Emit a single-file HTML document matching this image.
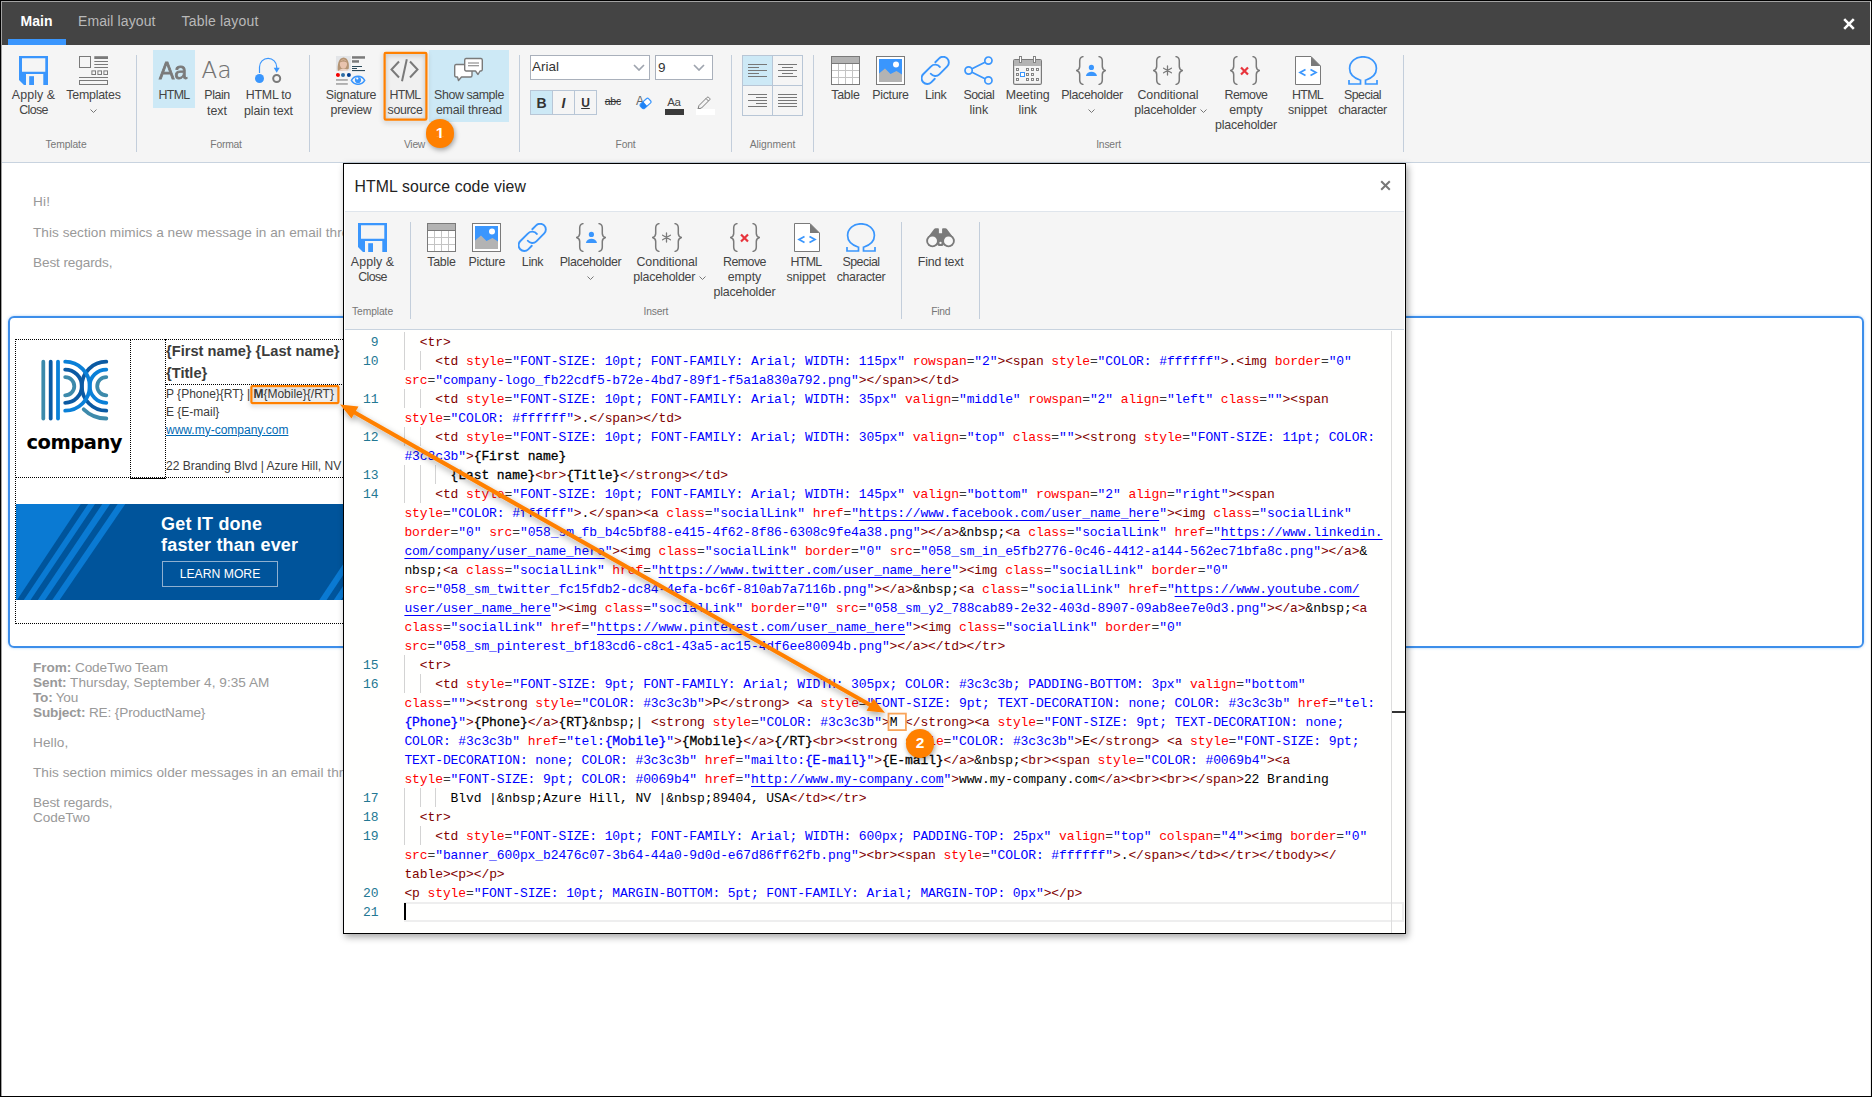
<!DOCTYPE html><html><head><meta charset="utf-8"><title>HTML source code view</title><style>
*{box-sizing:border-box;margin:0;padding:0}
html,body{width:1872px;height:1097px;overflow:hidden;background:#fff}
body{position:relative;font-family:"Liberation Sans",sans-serif;font-size:12px;color:#444}
.abs{position:absolute}
#frame{position:absolute;left:0;top:0;width:1872px;height:1097px;border:1px solid #000;z-index:50;pointer-events:none}
#frame2{position:absolute;left:1px;top:1px;width:1870px;height:1095px;border-left:1px solid #a3a3a3;border-top:1px solid #a3a3a3;border-right:1px solid #ececec;z-index:49}
#hdr{position:absolute;left:2px;top:2px;width:1869px;height:43px;background:#444}
.tab{position:absolute;top:13px;font-size:14px;line-height:17px;color:#b9b9b9;white-space:nowrap}
.rib{position:absolute;background:#f5f5f5}
.lbl{position:absolute;white-space:nowrap;text-align:center;font-size:12.4px;line-height:15px;color:#444;transform:translateX(-50%)}
.grp{position:absolute;white-space:nowrap;font-size:10.3px;line-height:12px;color:#777;transform:translateX(-50%)}
.sep{position:absolute;width:1px;background:#c3cedb}
.ico{position:absolute}
.ico svg{display:block}
.chev{position:absolute;width:7px;height:4px}
.chev svg{display:block}
.hl{position:absolute;background:#cde9f6}
.mail{position:absolute;white-space:nowrap;font-size:13.6px;line-height:16px;color:#999}
.sig{position:absolute;white-space:nowrap;font-family:"Liberation Sans",sans-serif;color:#3c3c3b}
.ln{position:absolute;left:345px;width:33.5px;text-align:right;font-family:"Liberation Mono",monospace;font-size:13px;letter-spacing:-0.1px;line-height:19px;color:#237893;white-space:pre}
.cl{position:absolute;left:404.4px;font-family:"Liberation Mono",monospace;font-size:13px;letter-spacing:-0.1px;line-height:19px;color:#000;white-space:pre}
.cl .d,.cl .t{color:#800000}
.cl .a{color:#ff0000}
.cl .e{color:#383838}
.cl .v,.cl .u,.cl .vb{color:#0000ff}
.cl .u{text-decoration:underline;text-underline-offset:3px}
.cl .pb,.cl .vb{font-weight:normal;-webkit-text-stroke:.28px currentColor}
.guide{position:absolute;width:1px;background:#d3d3d3}
.obox{position:absolute;border:2px solid #f5821f;box-shadow:0 0 5px rgba(0,0,0,.35)}
.ocirc{position:absolute;width:28.8px;height:28.8px;border-radius:50%;background:#ff8000;color:#fff;font-size:15.5px;font-weight:bold;line-height:28.8px;text-align:center;box-shadow:1px 2px 5px rgba(0,0,0,.35)}
</style></head><body>
<div id="frame2"></div>
<div id="hdr"></div>
<div class="tab" style="left:20.5px;color:#fff"><span style="font-weight:bold;font-size:14.0px;letter-spacing:0.078px">Main</span></div>
<div class="tab" style="left:78px"><span style="font-size:14.0px;letter-spacing:0.112px">Email layout</span></div>
<div class="tab" style="left:181.5px"><span style="font-size:14.0px;letter-spacing:0.190px">Table layout</span></div>
<div class="abs" style="left:8px;top:39px;width:58px;height:6px;background:#3a96fd"></div>
<svg class="abs" style="left:1843px;top:18px" width="12" height="12" viewBox="0 0 12 12"><path d="M1.2 1.2L10.8 10.8M10.8 1.2L1.2 10.8" stroke="#fff" stroke-width="2.6"/></svg>
<div class="rib" style="left:2px;top:45px;width:1869px;height:117px"></div>
<div class="abs" style="left:2px;top:162px;width:1869px;height:1px;background:#c8d3df"></div>
<div class="hl" style="left:153px;top:50px;width:42px;height:58px"></div>
<div class="hl" style="left:429px;top:50px;width:80px;height:72px"></div>
<div class="ico" style="left:19.0px;top:56px"><svg xmlns="http://www.w3.org/2000/svg" width="29" height="29" viewBox="0 0 29 29"><path fill="#3a96fd" fill-rule="evenodd" d="M0 0H29V29H24.3V18H7V29H5L0 24Z M3 2.2H26.3V15.8H3Z"/><rect x="10.2" y="20.2" width="4.8" height="8.8" fill="#3a96fd"/></svg></div><div class="lbl" style="left:33.5px;top:88.2px"><span style="font-size:12.4px;letter-spacing:0.102px">Apply &amp;</span><br><span style="font-size:12.4px;letter-spacing:-0.594px">Close</span></div>
<div class="ico" style="left:79.0px;top:56px"><svg xmlns="http://www.w3.org/2000/svg" width="29" height="29" viewBox="0 0 29 29"><g fill="none" stroke="#7a7a7a" stroke-width="1">
<rect x="0.5" y="0.5" width="11" height="11"/>
<path d="M15.3 5.5H29M15.3 8.5H29M15.3 11.5H29M0 21.5H29"/>
<rect x="12.9" y="14.9" width="3.6" height="3.6"/><rect x="18.9" y="14.9" width="3.6" height="3.6"/><rect x="24.9" y="14.9" width="3.6" height="3.6"/>
<rect x="0.5" y="24.5" width="28" height="4"/></g>
<rect x="15.3" y="0.2" width="13.7" height="2.8" fill="#7a7a7a"/></svg></div><div class="lbl" style="left:93.5px;top:88.2px"><span style="font-size:12.4px;letter-spacing:-0.237px">Templates</span></div>
<div class="chev" style="left:90.3px;top:108.5px"><svg width="7" height="4" viewBox="0 0 7 4"><path d="M0.5 0.5L3.5 3.5L6.5 0.5" fill="none" stroke="#777" stroke-width="1"/></svg></div>
<div class="sep" style="left:136px;top:55px;height:97px"></div>
<div class="abs" style="left:158.8px;top:57.5px;font-size:24.5px;font-weight:normal;-webkit-text-stroke:.85px #7a7a7a;color:#7a7a7a;line-height:26px;transform:scaleX(.94);transform-origin:0 0">Aa</div>
<div class="abs" style="left:201.5px;top:56.8px;font-size:22.8px;font-family:'DejaVu Sans Light','DejaVu Sans',sans-serif;font-weight:200;color:#707070;-webkit-text-stroke:.15px #707070;letter-spacing:.3px;line-height:26px">Aa</div>
<div class="lbl" style="left:174px;top:88.2px"><span style="font-size:12.4px;letter-spacing:-0.633px">HTML</span></div>
<div class="lbl" style="left:217px;top:87.8px;line-height:15.8px"><span style="font-size:12.4px;letter-spacing:-0.431px">Plain</span><br><span style="font-size:12.4px;letter-spacing:-0.018px">text</span></div>
<div class="ico" style="left:254.0px;top:56px"><svg xmlns="http://www.w3.org/2000/svg" width="29" height="29" viewBox="0 0 29 29"><circle cx="5.5" cy="22.5" r="4.5" fill="#3a96fd"/>
<circle cx="22.7" cy="22.5" r="3.5" fill="none" stroke="#7a7a7a" stroke-width="2"/>
<path d="M5.5 17V11A8.6 8.6 0 0 1 22.7 11V13" fill="none" stroke="#3a96fd" stroke-width="1.2"/>
<path d="M19.7 11.7H25.7L22.7 16.7Z" fill="#3a96fd"/></svg></div><div class="lbl" style="line-height:15.8px;margin-top:-.4px;left:268.5px;top:88.2px"><span style="font-size:12.4px;letter-spacing:-0.210px">HTML to</span><br><span style="font-size:12.4px;letter-spacing:-0.068px">plain text</span></div>
<div class="sep" style="left:309px;top:55px;height:97px"></div>
<div class="ico" style="left:336.0px;top:56px"><svg xmlns="http://www.w3.org/2000/svg" width="30" height="29" viewBox="0 0 30 29"><rect x="0" y="0" width="14.8" height="14.8" fill="#e3e5e8"/>
<path d="M1.8 14.8C1.2 9 2.5 1.6 7.6 1.4C12.6 1.6 13.6 9 12.6 13C11.5 14 3 14.6 1.8 14.8Z" fill="#b49474"/>
<ellipse cx="7.4" cy="8" rx="3.6" ry="4.6" fill="#e8c3ae"/>
<path d="M3.5 7C4 3.4 10.6 3 11.2 7C9.5 5.2 5.6 5 3.5 7Z" fill="#a98a68"/>
<path d="M3 14.8C4 12.2 11 12.2 12.4 14.8Z" fill="#ecd3c6"/>
<rect x="16" y="0.2" width="13" height="2.5" fill="#7a7a7a"/><rect x="16" y="4.2" width="7" height="2.5" fill="#7a7a7a"/>
<rect x="16" y="10" width="10" height="1" fill="#2c4a5a"/><rect x="16" y="12" width="5" height="1" fill="#2c4a5a"/><rect x="16" y="14" width="13" height="1.1" fill="#2c4a5a"/>
<circle cx="1.95" cy="19" r="2" fill="#f40000"/><circle cx="7" cy="19" r="2" fill="#2e6da4"/><circle cx="12.9" cy="19" r="2" fill="#003d8f"/>
<rect x="0" y="23.1" width="11.8" height="1.7" fill="#a8a8a8"/><rect x="0" y="27.1" width="11.8" height="1.7" fill="#a8a8a8"/>
<path d="M15.4 24.4C18.5 19 25.5 19 28.7 24.4C25.5 29.6 18.5 29.6 15.4 24.4Z" fill="none" stroke="#3a96fd" stroke-width="1.5"/>
<circle cx="22" cy="24" r="3.1" fill="#3a96fd"/><circle cx="21.3" cy="22.5" r="1.1" fill="#fff"/></svg></div><div class="lbl" style="left:351px;top:88.2px"><span style="font-size:12.4px;letter-spacing:-0.287px">Signature</span><br><span style="font-size:12.4px;letter-spacing:-0.234px">preview</span></div>
<div class="abs" style="left:384px;top:52px;width:43px;height:68px;background:#f0f0f0;box-shadow:inset 0 0 5px rgba(0,0,0,.16)"></div>
<div class="ico" style="left:389.7px;top:56px"><svg xmlns="http://www.w3.org/2000/svg" width="29" height="29" viewBox="0 0 29 29"><g fill="none" stroke="#7a7a7a" stroke-width="2"><path d="M9 5.5L1.5 13.5L9 21.5"/><path d="M20 5.5L27.5 13.5L20 21.5"/><path d="M16.8 3.3L12 25.3"/></g></svg></div><div class="lbl" style="left:405px;top:88.2px"><span style="font-size:12.4px;letter-spacing:-0.633px">HTML</span><br><span style="font-size:12.4px;letter-spacing:-0.389px">source</span></div>
<div class="ico" style="left:453.8px;top:56px"><svg xmlns="http://www.w3.org/2000/svg" width="29" height="29" viewBox="0 0 29 29"><g stroke="#7a7a7a" stroke-width="1.4" fill="#fff" stroke-linejoin="round">
<path d="M2 8.5H16.5A1.5 1.5 0 0 1 18 10V19.5A1.5 1.5 0 0 1 16.5 21H7.5L4.5 24.5L3.5 21H2A1.5 1.5 0 0 1 .7 19.5V10A1.5 1.5 0 0 1 2 8.5Z"/>
<path d="M12 2.5H27A1.5 1.5 0 0 1 28.3 4V13.5A1.5 1.5 0 0 1 27 15H26L24 18.5L21.5 15H12A1.5 1.5 0 0 1 10.7 13.5V4A1.5 1.5 0 0 1 12 2.5Z"/></g>
<path d="M14 7H25M14 9.8H25" stroke="#7a7a7a" stroke-width="1.1"/></svg></div><div class="lbl" style="left:469px;top:88.2px"><span style="font-size:12.4px;letter-spacing:-0.414px">Show sample</span><br><span style="font-size:12.4px;letter-spacing:-0.166px">email thread</span></div>
<div class="sep" style="left:519px;top:55px;height:97px"></div>
<div class="abs" style="left:530px;top:55px;width:120px;height:25px;background:#fff;border:1px solid #a9b0bb"></div>
<div class="abs" style="left:532px;top:59px;font-size:13.5px;color:#333;line-height:16px">Arial</div>
<svg class="abs" style="left:633px;top:64px" width="12" height="7" viewBox="0 0 12 7"><path d="M1 1L6 6L11 1" fill="none" stroke="#9fa5af" stroke-width="1.7"/></svg>
<div class="abs" style="left:655px;top:55px;width:58px;height:25px;background:#fff;border:1px solid #a9b0bb"></div>
<div class="abs" style="left:658px;top:59.5px;font-size:13.5px;color:#333;line-height:16px">9</div>
<svg class="abs" style="left:693px;top:64px" width="12" height="7" viewBox="0 0 12 7"><path d="M1 1L6 6L11 1" fill="none" stroke="#9fa5af" stroke-width="1.7"/></svg>
<div class="abs" style="left:530px;top:90px;width:67px;height:25px;border:1px solid #b8c6d6"></div>
<div class="abs" style="left:531px;top:91px;width:21px;height:23px;background:#cde9f6"></div>
<div class="abs" style="left:552px;top:91px;width:1px;height:23px;background:#b8c6d6"></div>
<div class="abs" style="left:574px;top:91px;width:1px;height:23px;background:#b8c6d6"></div>
<div class="abs" style="left:531px;top:94px;width:21px;text-align:center;font-size:14px;font-weight:bold;color:#333;line-height:18px">B</div>
<div class="abs" style="left:553px;top:94px;width:21px;text-align:center;font-size:14px;font-weight:bold;font-style:italic;color:#333;line-height:18px">I</div>
<div class="abs" style="left:575px;top:94px;width:21px;text-align:center;font-size:12px;font-weight:bold;text-decoration:underline;color:#333;line-height:18px">U</div>
<div class="abs" style="left:604.8px;top:94.2px;font-size:10.5px;text-decoration:line-through;color:#333;line-height:14px;letter-spacing:-.3px">abc</div>
<div class="abs" style="left:636px;top:94px;font-size:12px;color:#666;line-height:14px">A</div>
<svg class="abs" style="left:639.3px;top:97.3px" width="13" height="13" viewBox="0 0 14 14"><g transform="rotate(-42 7 7)"><rect x="1" y="3.8" width="12" height="6.4" rx="1.8" fill="#fff" stroke="#3a96fd" stroke-width="1.3"/><path d="M1 6A2.2 2.2 0 0 1 3.2 3.8H6.5V10.2H3.2A2.2 2.2 0 0 1 1 8Z" fill="#1e82f5"/></g></svg>
<div class="abs" style="left:667.3px;top:95.2px;font-size:11.5px;color:#444;line-height:14px;letter-spacing:-.4px">Aa</div>
<div class="abs" style="left:665px;top:109px;width:19px;height:6px;background:#3a3a3a"></div>
<svg class="abs" style="left:697px;top:96px" width="14" height="14" viewBox="0 0 14 14"><g fill="none" stroke="#7a7a7a" stroke-width="1"><path d="M1 13L2 9.5L10.2 1.3A1 1 0 0 1 11.6 1.3L12.7 2.4A1 1 0 0 1 12.7 3.8L4.5 12Z"/><path d="M9 2.5L11.5 5"/></g></svg>
<div class="abs" style="left:696px;top:109px;width:19px;height:6px;background:#fff"></div>
<div class="sep" style="left:731px;top:55px;height:97px"></div>
<div class="abs" style="left:742px;top:55px;width:61px;height:61px;border:1px solid #b8c6d6"></div>
<div class="abs" style="left:743px;top:56px;width:29px;height:29px;background:#cde9f6"></div>
<div class="abs" style="left:772px;top:56px;width:1px;height:59px;background:#b8c6d6"></div>
<div class="abs" style="left:743px;top:85px;width:59px;height:1px;background:#b8c6d6"></div>
<div class="abs" style="left:748px;top:64px;width:19px;height:1px;background:#777"></div><div class="abs" style="left:748px;top:67px;width:11px;height:1px;background:#777"></div><div class="abs" style="left:748px;top:70px;width:19px;height:1px;background:#777"></div><div class="abs" style="left:748px;top:73px;width:11px;height:1px;background:#777"></div><div class="abs" style="left:748px;top:76px;width:19px;height:1px;background:#777"></div>
<div class="abs" style="left:778px;top:64px;width:19px;height:1px;background:#777"></div><div class="abs" style="left:782px;top:67px;width:11px;height:1px;background:#777"></div><div class="abs" style="left:778px;top:70px;width:19px;height:1px;background:#777"></div><div class="abs" style="left:782px;top:73px;width:11px;height:1px;background:#777"></div><div class="abs" style="left:778px;top:76px;width:19px;height:1px;background:#777"></div>
<div class="abs" style="left:748px;top:94px;width:19px;height:1px;background:#777"></div><div class="abs" style="left:756px;top:97px;width:11px;height:1px;background:#777"></div><div class="abs" style="left:748px;top:100px;width:19px;height:1px;background:#777"></div><div class="abs" style="left:756px;top:103px;width:11px;height:1px;background:#777"></div><div class="abs" style="left:748px;top:106px;width:19px;height:1px;background:#777"></div>
<div class="abs" style="left:778px;top:94px;width:19px;height:1px;background:#777"></div><div class="abs" style="left:778px;top:97px;width:19px;height:1px;background:#777"></div><div class="abs" style="left:778px;top:100px;width:19px;height:1px;background:#777"></div><div class="abs" style="left:778px;top:103px;width:19px;height:1px;background:#777"></div><div class="abs" style="left:778px;top:106px;width:19px;height:1px;background:#777"></div>
<div class="sep" style="left:813px;top:55px;height:97px"></div>
<div class="ico" style="left:831.0px;top:56px"><svg xmlns="http://www.w3.org/2000/svg" width="29" height="29" viewBox="0 0 29 29"><rect x="0.5" y="0.5" width="28" height="28" fill="#fff" stroke="#7a7a7a"/>
<rect x="1" y="1" width="27" height="6" fill="#b3b3b3"/>
<path d="M7.5 7.5V28M14.5 7.5V28M21.5 7.5V28M1 14.5H28M1 21.5H28" stroke="#c4c4c4" stroke-width="1"/>
<path d="M1 7.5H28" stroke="#7a7a7a" stroke-width="1"/></svg></div><div class="lbl" style="left:845.5px;top:88.2px"><span style="font-size:12.4px;letter-spacing:-0.203px">Table</span></div>
<div class="ico" style="left:876.0px;top:56px"><svg xmlns="http://www.w3.org/2000/svg" width="29" height="29" viewBox="0 0 29 29"><rect x="0.5" y="0.5" width="28" height="28" fill="#fff" stroke="#7a7a7a"/>
<rect x="3" y="3" width="23" height="23" fill="#3a96fd"/>
<path d="M3 17.5L9 12.5L14.5 18L20.5 15L26 18.5V26H3Z" fill="#b3b3b3"/>
<circle cx="20" cy="8.5" r="3" fill="#fff"/></svg></div><div class="lbl" style="left:890.5px;top:88.2px"><span style="font-size:12.4px;letter-spacing:-0.305px">Picture</span></div>
<div class="ico" style="left:921.2px;top:56px"><svg xmlns="http://www.w3.org/2000/svg" width="29" height="29" viewBox="0 0 29 29"><g fill="none" stroke="#3a96fd" stroke-width="1.9" stroke-linecap="round">
<path d="M14.3 6.2L18.17 2.37A5.7 5.7 0 0 1 26.23 10.43L18.33 18.33A5.7 5.7 0 0 1 9.8 17.7"/>
<path d="M18.8 10.9A5.7 5.7 0 0 0 10.07 10.37L2.17 18.27A5.7 5.7 0 0 0 10.23 26.33L13.8 22.8"/></g></svg></div><div class="lbl" style="left:935.7px;top:88.2px"><span style="font-size:12.4px;letter-spacing:-0.362px">Link</span></div>
<div class="ico" style="left:964.3px;top:56px"><svg xmlns="http://www.w3.org/2000/svg" width="29" height="29" viewBox="0 0 29 29"><g fill="none" stroke="#3a96fd" stroke-width="1.7">
<circle cx="4.6" cy="14.5" r="3.6"/><circle cx="24.4" cy="4.6" r="3.6"/><circle cx="24.4" cy="24.4" r="3.6"/>
<path d="M8 12.8L21 6.3M8 16.2L21 22.7"/></g></svg></div><div class="lbl" style="left:978.8px;top:88.2px"><span style="font-size:12.4px;letter-spacing:-0.485px">Social</span><br><span style="font-size:12.4px;letter-spacing:-0.012px">link</span></div>
<div class="ico" style="left:1013.2px;top:56px"><svg xmlns="http://www.w3.org/2000/svg" width="29" height="29" viewBox="0 0 29 29"><rect x="0.6" y="3.6" width="27.8" height="24.8" rx="1.5" fill="#f5f5f5" stroke="#7a7a7a" stroke-width="1.2"/>
<path d="M1 4H28V10H1Z" fill="#b3b3b3"/>
<rect x="6.5" y="0.5" width="2" height="6" fill="#fff" stroke="#7a7a7a" stroke-width="0.9"/><rect x="20.5" y="0.5" width="2" height="6" fill="#fff" stroke="#7a7a7a" stroke-width="0.9"/>
<g fill="none" stroke="#7a7a7a" stroke-width="0.9">
<rect x="3.5" y="12.5" width="2" height="2"/><rect x="13.5" y="12.5" width="2" height="2"/><rect x="18.5" y="12.5" width="2" height="2"/><rect x="23.5" y="12.5" width="2" height="2"/>
<rect x="3.5" y="17.5" width="2" height="2"/><rect x="13.5" y="17.5" width="2" height="2"/><rect x="18.5" y="17.5" width="2" height="2"/>
<rect x="3.5" y="22.5" width="2" height="2"/><rect x="13.5" y="22.5" width="2" height="2"/><rect x="18.5" y="22.5" width="2" height="2"/><rect x="23.5" y="22.5" width="2" height="2"/></g>
<rect x="7.5" y="16.5" width="4" height="4" fill="#fff" stroke="#3a96fd" stroke-width="1"/></svg></div><div class="lbl" style="left:1027.7px;top:88.2px"><span style="font-size:12.4px;letter-spacing:0.002px">Meeting</span><br><span style="font-size:12.4px;letter-spacing:-0.012px">link</span></div>
<div class="ico" style="left:1076.0px;top:56px"><svg xmlns="http://www.w3.org/2000/svg" width="30" height="29" viewBox="0 0 30 29"><g fill="none" stroke="#7a7a7a" stroke-width="1.5" stroke-linecap="round"><path d="M6.9 0.6C4.6 1.2 3.7 2.6 3.7 5V10.5C3.7 12.6 2.6 13.8 0.6 14.5C2.6 15.2 3.7 16.4 3.7 18.5V24C3.7 26.4 4.6 27.8 6.9 28.4"/><path d="M23.1 0.6C25.4 1.2 26.3 2.6 26.3 5V10.5C26.3 12.6 27.4 13.8 29.4 14.5C27.4 15.2 26.3 16.4 26.3 18.5V24C26.3 26.4 25.4 27.8 23.1 28.4"/></g><circle cx="15.4" cy="11.4" r="2.6" fill="#3a96fd"/><path d="M9.9 19.9C11 14.3 19.9 14.3 21 19.9Z" fill="#3a96fd"/></svg></div><div class="lbl" style="left:1092px;top:88.2px"><span style="font-size:12.4px;letter-spacing:-0.339px">Placeholder</span></div>
<div class="chev" style="left:1088.3px;top:108.5px"><svg width="7" height="4" viewBox="0 0 7 4"><path d="M0.5 0.5L3.5 3.5L6.5 0.5" fill="none" stroke="#777" stroke-width="1"/></svg></div>
<div class="ico" style="left:1153.0px;top:56px"><svg xmlns="http://www.w3.org/2000/svg" width="30" height="29" viewBox="0 0 30 29"><g fill="none" stroke="#7a7a7a" stroke-width="1.5" stroke-linecap="round"><path d="M6.9 0.6C4.6 1.2 3.7 2.6 3.7 5V10.5C3.7 12.6 2.6 13.8 0.6 14.5C2.6 15.2 3.7 16.4 3.7 18.5V24C3.7 26.4 4.6 27.8 6.9 28.4"/><path d="M23.1 0.6C25.4 1.2 26.3 2.6 26.3 5V10.5C26.3 12.6 27.4 13.8 29.4 14.5C27.4 15.2 26.3 16.4 26.3 18.5V24C26.3 26.4 25.4 27.8 23.1 28.4"/></g><g stroke="#7a7a7a" stroke-width="1.3" stroke-linecap="round"><path d="M14.5 10V19M10.6 12.2L18.4 16.8M18.4 12.2L10.6 16.8"/></g></svg></div><div class="lbl" style="left:1168px;top:88.2px"><span style="font-size:12.4px;letter-spacing:-0.095px">Conditional</span><br><span style="font-size:12.4px;letter-spacing:-0.183px">placeholder</span><span style="display:inline-block;width:5.5px"></span></div>
<div class="chev" style="left:1199.5px;top:108.5px"><svg width="7" height="4" viewBox="0 0 7 4"><path d="M0.5 0.5L3.5 3.5L6.5 0.5" fill="none" stroke="#777" stroke-width="1"/></svg></div>
<div class="ico" style="left:1230.0px;top:56px"><svg xmlns="http://www.w3.org/2000/svg" width="30" height="29" viewBox="0 0 30 29"><g fill="none" stroke="#7a7a7a" stroke-width="1.5" stroke-linecap="round"><path d="M6.9 0.6C4.6 1.2 3.7 2.6 3.7 5V10.5C3.7 12.6 2.6 13.8 0.6 14.5C2.6 15.2 3.7 16.4 3.7 18.5V24C3.7 26.4 4.6 27.8 6.9 28.4"/><path d="M23.1 0.6C25.4 1.2 26.3 2.6 26.3 5V10.5C26.3 12.6 27.4 13.8 29.4 14.5C27.4 15.2 26.3 16.4 26.3 18.5V24C26.3 26.4 25.4 27.8 23.1 28.4"/></g><g stroke="#e8343c" stroke-width="2.2"><path d="M11 11.5L18 18.5M18 11.5L11 18.5"/></g></svg></div><div class="lbl" style="left:1246px;top:88.2px"><span style="font-size:12.4px;letter-spacing:-0.558px">Remove</span><br><span style="font-size:12.4px;letter-spacing:-0.051px">empty</span><br><span style="font-size:12.4px;letter-spacing:-0.183px">placeholder</span></div>
<div class="ico" style="left:1293.0px;top:56px"><svg xmlns="http://www.w3.org/2000/svg" width="29" height="29" viewBox="0 0 29 29"><path d="M2.5 0.5H18L27.5 10V28.5H2.5Z" fill="#fff" stroke="#7a7a7a" stroke-width="1"/>
<path d="M18 0.5V10H27.5Z" fill="#7a7a7a"/>
<g fill="none" stroke="#3a96fd" stroke-width="1.7"><path d="M12.5 13.5L7 16.5L12.5 19.5"/><path d="M17.5 13.5L23 16.5L17.5 19.5"/></g></svg></div><div class="lbl" style="left:1307.5px;top:88.2px"><span style="font-size:12.4px;letter-spacing:-0.633px">HTML</span><br><span style="font-size:12.4px;letter-spacing:-0.108px">snippet</span></div>
<div class="ico" style="left:1347.5px;top:56px"><svg xmlns="http://www.w3.org/2000/svg" width="30" height="29" viewBox="0 0 30 29"><path d="M1 24V28H12.5V24.2C5.5 22 1.6 17.5 1.6 12.5C1.6 5.5 7.5 0.8 15 0.8C22.5 0.8 28.4 5.5 28.4 12.5C28.4 17.5 24.5 22 17.5 24.2V28H29V24" fill="none" stroke="#3a96fd" stroke-width="1.7"/></svg></div><div class="lbl" style="left:1362.5px;top:88.2px"><span style="font-size:12.4px;letter-spacing:-0.501px">Special</span><br><span style="font-size:12.4px;letter-spacing:-0.327px">character</span></div>
<div class="sep" style="left:1403px;top:55px;height:97px"></div>
<div class="grp" style="left:66px;top:139px"><span style="font-size:10.3px;letter-spacing:-0.090px">Template</span></div>
<div class="grp" style="left:226px;top:139px"><span style="font-size:10.3px;letter-spacing:-0.222px">Format</span></div>
<div class="grp" style="left:414.5px;top:139px"><span style="font-size:10.3px;letter-spacing:-0.261px">View</span></div>
<div class="grp" style="left:625.5px;top:139px"><span style="font-size:10.3px;letter-spacing:-0.207px">Font</span></div>
<div class="grp" style="left:772.5px;top:139px"><span style="font-size:10.3px;letter-spacing:-0.013px">Alignment</span></div>
<div class="grp" style="left:1108.5px;top:139px"><span style="font-size:10.3px;letter-spacing:-0.186px">Insert</span></div>
<div class="mail" style="left:33px;top:194px"><span style="font-size:13.6px;letter-spacing:0.229px">Hi!</span></div>
<div class="mail" style="left:33px;top:224.5px"><span style="font-size:13.6px;letter-spacing:0.041px">This section mimics a new message in an email thread.</span></div>
<div class="mail" style="left:33px;top:254.5px"><span style="font-size:13.6px;letter-spacing:-0.109px">Best regards,</span></div>
<div class="abs" style="left:8px;top:316px;width:1856px;height:332px;border:2px solid #3d8eea;border-radius:6px;box-shadow:0 0 3px rgba(61,142,234,.4)"></div>
<div class="abs" style="left:15px;top:339px;width:420px;height:285px;border:1px dotted #000"></div>
<div class="abs" style="left:15px;top:477px;width:420px;height:0;border-top:1px dotted #000"></div>
<div class="abs" style="left:130px;top:339px;width:36px;height:140px;border:1px dotted #000;border-top:none;border-bottom:1px solid #000"></div>
<div class="abs" style="left:166px;top:384px;width:270px;height:0;border-top:1px dotted #000"></div>
<svg class="abs" style="left:41px;top:359px" width="72" height="64" viewBox="0 0 72 64">
<g fill="none" stroke-width="3.8" stroke-linecap="round">
<path d="M2.3 2.7V59.5" stroke="#3d8aab"/><path d="M9.7 2.7V59.5" stroke="#0b5aa3"/><path d="M17 2.7V59.5" stroke="#0a80d8"/>
<path d="M65.3 59.5A32.3 32.3 0 0 1 42.7 50.3" stroke="#3d8aab"/>
<path d="M65.3 2.7A24.5 24.5 0 0 0 65.3 51.7" stroke="#0b5aa3"/>
<path d="M65.3 10.6A16.6 16.6 0 0 0 65.3 43.8" stroke="#0a80d8"/>
<path d="M65.3 18.1A9.1 9.1 0 0 0 65.3 36.3" stroke="#3d8aab"/>
<path d="M24.2 10.6A16.6 16.6 0 0 1 24.2 43.8" stroke="#0b5aa3"/>
<path d="M24.2 18.1A9.1 9.1 0 0 1 24.2 36.3" stroke="#3d8aab"/>
<path d="M24.2 2.7A24.5 24.5 0 0 1 24.2 51.7" stroke="#0a80d8"/>
</g></svg>
<div class="abs" style="left:26.5px;top:431px;font-family:'DejaVu Sans',sans-serif;font-weight:bold;font-size:19.5px;letter-spacing:-0.5px;color:#000;line-height:24px">company</div>
<div class="sig" style="left:166px;top:341.5px;font-size:14.67px;font-weight:bold;line-height:18px">{First name} {Last name}</div>
<div class="sig" style="left:166px;top:363.5px;font-size:14.67px;font-weight:bold;line-height:18px">{Title}</div>
<div class="sig" style="left:166px;top:386.5px;font-size:12px;line-height:14px">P {Phone}{RT} | <b>M</b>{Mobile}{/RT}</div>
<div class="sig" style="left:166px;top:404.5px;font-size:12px;line-height:14px">E {E-mail}</div>
<div class="sig" style="left:166px;top:422.5px;font-size:12px;line-height:14px;color:#0069b4;text-decoration:underline">www.my-company.com</div>
<div class="sig" style="left:166px;top:458.5px;font-size:12px;line-height:14px">22 Branding Blvd | Azure Hill, NV | 89404, USA</div>
<svg class="abs" style="left:16px;top:504px" width="600" height="96" viewBox="0 0 600 96">
<rect width="600" height="96" fill="#00549b"/>
<g fill="#0a7ad3"><path d="M0 0H64.8L1 96H0Z"/><path d="M72.1 0H79L14.5 96H7.8Z"/><path d="M86.3 0H94.1L29 96H21.8Z"/><path d="M101.7 0H109.3L43.6 96H36.3Z"/>
<path d="M367.2 0H374.5L310.6 96H303.3Z"/><path d="M381.7 0H389L325 96H317.8Z"/><path d="M396 0H600V96H332Z"/></g>
</svg>
<div class="abs" style="left:161px;top:513.5px;font-size:18px;font-weight:bold;color:#fff;line-height:21px;letter-spacing:.2px;white-space:nowrap">Get IT done<br>faster than ever</div>
<div class="abs" style="left:162px;top:561px;width:116px;height:26px;border:1px solid #8fb0d0;color:#fff;font-size:12.2px;line-height:24px;text-align:center">LEARN MORE</div>
<div class="mail" style="left:33px;top:659.5px;color:#999"><span style="font-weight:bold;font-size:13.6px;letter-spacing:-0.046px">From:</span><span style="font-size:13.6px;letter-spacing:-0.109px"> CodeTwo Team</span></div>
<div class="mail" style="left:33px;top:674.5px;color:#999"><span style="font-weight:bold;font-size:13.6px;letter-spacing:-0.100px">Sent:</span><span style="font-size:13.6px;letter-spacing:0.029px"> Thursday, September 4, 9:35 AM</span></div>
<div class="mail" style="left:33px;top:689.5px;color:#999"><span style="font-weight:bold;font-size:13.6px;letter-spacing:-0.211px">To:</span><span style="font-size:13.6px;letter-spacing:-0.246px"> You</span></div>
<div class="mail" style="left:33px;top:704.5px;color:#999"><span style="font-weight:bold;font-size:13.6px;letter-spacing:-0.169px">Subject:</span><span style="font-size:13.6px;letter-spacing:-0.137px"> RE: {ProductName}</span></div>
<div class="mail" style="left:33px;top:734.5px;color:#999"><span style="font-size:13.6px;letter-spacing:0.085px">Hello,</span></div>
<div class="mail" style="left:33px;top:764.5px;color:#999"><span style="font-size:13.6px;letter-spacing:0.057px">This section mimics older messages in an email thread.</span></div>
<div class="mail" style="left:33px;top:794.5px;color:#999"><span style="font-size:13.6px;letter-spacing:-0.109px">Best regards,</span></div>
<div class="mail" style="left:33px;top:809.5px;color:#999"><span style="font-size:13.6px;letter-spacing:-0.065px">CodeTwo</span></div>
<div class="abs" style="left:343px;top:163px;width:1063px;height:771px;background:#fff;border:1px solid #000;box-shadow:2px 3px 7px rgba(0,0,0,.36)"></div>
<div class="abs" style="left:354.5px;top:176.5px;color:#222;line-height:19px;white-space:nowrap"><span style="font-size:15.8px;letter-spacing:0.129px">HTML source code view</span></div>
<svg class="abs" style="left:1380px;top:180px" width="11" height="11" viewBox="0 0 11 11"><path d="M1.2 1.2L9.8 9.8M9.8 1.2L1.2 9.8" stroke="#777" stroke-width="2"/></svg>
<div class="abs" style="left:345px;top:211px;width:1059px;height:1px;background:#dfe5ec"></div>
<div class="rib" style="left:345px;top:212px;width:1059px;height:117px"></div>
<div class="abs" style="left:345px;top:329px;width:1059px;height:1px;background:#c8d3df"></div>
<div class="ico" style="left:358.0px;top:223px"><svg xmlns="http://www.w3.org/2000/svg" width="29" height="29" viewBox="0 0 29 29"><path fill="#3a96fd" fill-rule="evenodd" d="M0 0H29V29H24.3V18H7V29H5L0 24Z M3 2.2H26.3V15.8H3Z"/><rect x="10.2" y="20.2" width="4.8" height="8.8" fill="#3a96fd"/></svg></div><div class="lbl" style="left:372.5px;top:255.2px"><span style="font-size:12.4px;letter-spacing:0.102px">Apply &amp;</span><br><span style="font-size:12.4px;letter-spacing:-0.594px">Close</span></div>
<div class="sep" style="left:410px;top:222px;height:97px"></div>
<div class="ico" style="left:427.0px;top:223px"><svg xmlns="http://www.w3.org/2000/svg" width="29" height="29" viewBox="0 0 29 29"><rect x="0.5" y="0.5" width="28" height="28" fill="#fff" stroke="#7a7a7a"/>
<rect x="1" y="1" width="27" height="6" fill="#b3b3b3"/>
<path d="M7.5 7.5V28M14.5 7.5V28M21.5 7.5V28M1 14.5H28M1 21.5H28" stroke="#c4c4c4" stroke-width="1"/>
<path d="M1 7.5H28" stroke="#7a7a7a" stroke-width="1"/></svg></div><div class="lbl" style="left:441.5px;top:255.2px"><span style="font-size:12.4px;letter-spacing:-0.203px">Table</span></div>
<div class="ico" style="left:472.3px;top:223px"><svg xmlns="http://www.w3.org/2000/svg" width="29" height="29" viewBox="0 0 29 29"><rect x="0.5" y="0.5" width="28" height="28" fill="#fff" stroke="#7a7a7a"/>
<rect x="3" y="3" width="23" height="23" fill="#3a96fd"/>
<path d="M3 17.5L9 12.5L14.5 18L20.5 15L26 18.5V26H3Z" fill="#b3b3b3"/>
<circle cx="20" cy="8.5" r="3" fill="#fff"/></svg></div><div class="lbl" style="left:486.8px;top:255.2px"><span style="font-size:12.4px;letter-spacing:-0.305px">Picture</span></div>
<div class="ico" style="left:518.0px;top:223px"><svg xmlns="http://www.w3.org/2000/svg" width="29" height="29" viewBox="0 0 29 29"><g fill="none" stroke="#3a96fd" stroke-width="1.9" stroke-linecap="round">
<path d="M14.3 6.2L18.17 2.37A5.7 5.7 0 0 1 26.23 10.43L18.33 18.33A5.7 5.7 0 0 1 9.8 17.7"/>
<path d="M18.8 10.9A5.7 5.7 0 0 0 10.07 10.37L2.17 18.27A5.7 5.7 0 0 0 10.23 26.33L13.8 22.8"/></g></svg></div><div class="lbl" style="left:532.5px;top:255.2px"><span style="font-size:12.4px;letter-spacing:-0.362px">Link</span></div>
<div class="ico" style="left:575.5px;top:223px"><svg xmlns="http://www.w3.org/2000/svg" width="30" height="29" viewBox="0 0 30 29"><g fill="none" stroke="#7a7a7a" stroke-width="1.5" stroke-linecap="round"><path d="M6.9 0.6C4.6 1.2 3.7 2.6 3.7 5V10.5C3.7 12.6 2.6 13.8 0.6 14.5C2.6 15.2 3.7 16.4 3.7 18.5V24C3.7 26.4 4.6 27.8 6.9 28.4"/><path d="M23.1 0.6C25.4 1.2 26.3 2.6 26.3 5V10.5C26.3 12.6 27.4 13.8 29.4 14.5C27.4 15.2 26.3 16.4 26.3 18.5V24C26.3 26.4 25.4 27.8 23.1 28.4"/></g><circle cx="15.4" cy="11.4" r="2.6" fill="#3a96fd"/><path d="M9.9 19.9C11 14.3 19.9 14.3 21 19.9Z" fill="#3a96fd"/></svg></div><div class="lbl" style="left:590.5px;top:255.2px"><span style="font-size:12.4px;letter-spacing:-0.339px">Placeholder</span></div>
<div class="chev" style="left:587.1px;top:275.5px"><svg width="7" height="4" viewBox="0 0 7 4"><path d="M0.5 0.5L3.5 3.5L6.5 0.5" fill="none" stroke="#777" stroke-width="1"/></svg></div>
<div class="ico" style="left:652.0px;top:223px"><svg xmlns="http://www.w3.org/2000/svg" width="30" height="29" viewBox="0 0 30 29"><g fill="none" stroke="#7a7a7a" stroke-width="1.5" stroke-linecap="round"><path d="M6.9 0.6C4.6 1.2 3.7 2.6 3.7 5V10.5C3.7 12.6 2.6 13.8 0.6 14.5C2.6 15.2 3.7 16.4 3.7 18.5V24C3.7 26.4 4.6 27.8 6.9 28.4"/><path d="M23.1 0.6C25.4 1.2 26.3 2.6 26.3 5V10.5C26.3 12.6 27.4 13.8 29.4 14.5C27.4 15.2 26.3 16.4 26.3 18.5V24C26.3 26.4 25.4 27.8 23.1 28.4"/></g><g stroke="#7a7a7a" stroke-width="1.3" stroke-linecap="round"><path d="M14.5 10V19M10.6 12.2L18.4 16.8M18.4 12.2L10.6 16.8"/></g></svg></div><div class="lbl" style="left:667px;top:255.2px"><span style="font-size:12.4px;letter-spacing:-0.095px">Conditional</span><br><span style="font-size:12.4px;letter-spacing:-0.183px">placeholder</span><span style="display:inline-block;width:5.5px"></span></div>
<div class="chev" style="left:698.5px;top:275.5px"><svg width="7" height="4" viewBox="0 0 7 4"><path d="M0.5 0.5L3.5 3.5L6.5 0.5" fill="none" stroke="#777" stroke-width="1"/></svg></div>
<div class="ico" style="left:729.5px;top:223px"><svg xmlns="http://www.w3.org/2000/svg" width="30" height="29" viewBox="0 0 30 29"><g fill="none" stroke="#7a7a7a" stroke-width="1.5" stroke-linecap="round"><path d="M6.9 0.6C4.6 1.2 3.7 2.6 3.7 5V10.5C3.7 12.6 2.6 13.8 0.6 14.5C2.6 15.2 3.7 16.4 3.7 18.5V24C3.7 26.4 4.6 27.8 6.9 28.4"/><path d="M23.1 0.6C25.4 1.2 26.3 2.6 26.3 5V10.5C26.3 12.6 27.4 13.8 29.4 14.5C27.4 15.2 26.3 16.4 26.3 18.5V24C26.3 26.4 25.4 27.8 23.1 28.4"/></g><g stroke="#e8343c" stroke-width="2.2"><path d="M11 11.5L18 18.5M18 11.5L11 18.5"/></g></svg></div><div class="lbl" style="left:744.5px;top:255.2px"><span style="font-size:12.4px;letter-spacing:-0.558px">Remove</span><br><span style="font-size:12.4px;letter-spacing:-0.051px">empty</span><br><span style="font-size:12.4px;letter-spacing:-0.183px">placeholder</span></div>
<div class="ico" style="left:791.5px;top:223px"><svg xmlns="http://www.w3.org/2000/svg" width="29" height="29" viewBox="0 0 29 29"><path d="M2.5 0.5H18L27.5 10V28.5H2.5Z" fill="#fff" stroke="#7a7a7a" stroke-width="1"/>
<path d="M18 0.5V10H27.5Z" fill="#7a7a7a"/>
<g fill="none" stroke="#3a96fd" stroke-width="1.7"><path d="M12.5 13.5L7 16.5L12.5 19.5"/><path d="M17.5 13.5L23 16.5L17.5 19.5"/></g></svg></div><div class="lbl" style="left:806px;top:255.2px"><span style="font-size:12.4px;letter-spacing:-0.633px">HTML</span><br><span style="font-size:12.4px;letter-spacing:-0.108px">snippet</span></div>
<div class="ico" style="left:846.0px;top:223px"><svg xmlns="http://www.w3.org/2000/svg" width="30" height="29" viewBox="0 0 30 29"><path d="M1 24V28H12.5V24.2C5.5 22 1.6 17.5 1.6 12.5C1.6 5.5 7.5 0.8 15 0.8C22.5 0.8 28.4 5.5 28.4 12.5C28.4 17.5 24.5 22 17.5 24.2V28H29V24" fill="none" stroke="#3a96fd" stroke-width="1.7"/></svg></div><div class="lbl" style="left:861px;top:255.2px"><span style="font-size:12.4px;letter-spacing:-0.501px">Special</span><br><span style="font-size:12.4px;letter-spacing:-0.327px">character</span></div>
<div class="sep" style="left:901px;top:222px;height:97px"></div>
<div class="ico" style="left:926.0px;top:227.6px"><svg xmlns="http://www.w3.org/2000/svg" width="29" height="20" viewBox="0 0 29 20"><g fill="#7a7a7a">
<path d="M9.6 0.3H12C12.6 0.3 12.9 0.7 12.9 1.3V5.2H16.1V1.3C16.1 0.7 16.4 0.3 17 0.3H19.4C20 0.3 20.5 0.6 20.9 1.1L28 10.5V13H1V10.5L8.1 1.1C8.5 0.6 9 0.3 9.6 0.3Z"/>
<circle cx="6.5" cy="12.9" r="6.3"/><circle cx="22.5" cy="12.9" r="6.3"/>
<path d="M11 6H18V15.5A3.5 2.6 0 0 1 11 15.5Z"/></g>
<circle cx="6.5" cy="12.9" r="4.5" fill="#f7f7f7"/><circle cx="22.5" cy="12.9" r="4.5" fill="#f7f7f7"/>
<circle cx="14.5" cy="14.9" r="1.15" fill="#f5f5f5"/></svg></div><div class="lbl" style="left:940.7px;top:255.2px"><span style="font-size:12.4px;letter-spacing:-0.195px">Find text</span></div>
<div class="sep" style="left:979px;top:222px;height:97px"></div>
<div class="grp" style="left:372.5px;top:306px"><span style="font-size:10.3px;letter-spacing:-0.090px">Template</span></div>
<div class="grp" style="left:655.8px;top:306px"><span style="font-size:10.3px;letter-spacing:-0.186px">Insert</span></div>
<div class="grp" style="left:940.7px;top:306px"><span style="font-size:10.3px;letter-spacing:-0.301px">Find</span></div>
<div class="abs" style="left:345px;top:330px;width:1059px;height:603px;background:#fffffe"></div>
<div class="guide" style="left:404px;top:332px;height:19px"></div>
<div class="guide" style="left:404px;top:351px;height:19px"></div>
<div class="guide" style="left:404px;top:389px;height:19px"></div>
<div class="guide" style="left:404px;top:427px;height:19px"></div>
<div class="guide" style="left:404px;top:465px;height:19px"></div>
<div class="guide" style="left:404px;top:484px;height:19px"></div>
<div class="guide" style="left:404px;top:655px;height:19px"></div>
<div class="guide" style="left:404px;top:674px;height:19px"></div>
<div class="guide" style="left:404px;top:788px;height:19px"></div>
<div class="guide" style="left:404px;top:807px;height:19px"></div>
<div class="guide" style="left:404px;top:826px;height:19px"></div>
<div class="guide" style="left:420px;top:351px;height:19px"></div>
<div class="guide" style="left:420px;top:389px;height:19px"></div>
<div class="guide" style="left:420px;top:427px;height:19px"></div>
<div class="guide" style="left:420px;top:465px;height:19px"></div>
<div class="guide" style="left:420px;top:484px;height:19px"></div>
<div class="guide" style="left:420px;top:674px;height:19px"></div>
<div class="guide" style="left:420px;top:788px;height:19px"></div>
<div class="guide" style="left:420px;top:826px;height:19px"></div>
<div class="guide" style="left:435px;top:465px;height:19px"></div>
<div class="guide" style="left:435px;top:788px;height:19px"></div>
<div class="abs" style="left:404px;top:902px;width:1000px;height:19.5px;border:2px solid #eee;border-left:none"></div>
<div class="abs" style="left:404px;top:903px;width:2px;height:17px;background:#000"></div>
<div class="abs" style="left:1391px;top:331px;width:1px;height:602px;background:#ddd"></div>
<div class="abs" style="left:1392px;top:711px;width:13px;height:2px;background:#333"></div>
<div class="ln" style="top:332.6px">9</div>
<div class="cl" style="top:332.6px">  <span class="d">&lt;</span><span class="t">tr</span><span class="d">&gt;</span></div>
<div class="ln" style="top:351.6px">10</div>
<div class="cl" style="top:351.6px">    <span class="d">&lt;</span><span class="t">td</span> <span class="a">style</span><span class="e">=</span><span class="v">"FONT-SIZE: 10pt; FONT-FAMILY: Arial; WIDTH: 115px"</span> <span class="a">rowspan</span><span class="e">=</span><span class="v">"2"</span><span class="d">&gt;&lt;</span><span class="t">span</span> <span class="a">style</span><span class="e">=</span><span class="v">"COLOR: #ffffff"</span><span class="d">&gt;</span>.<span class="d">&lt;</span><span class="t">img</span> <span class="a">border</span><span class="e">=</span><span class="v">"0"</span> </div>
<div class="cl" style="top:370.6px"><span class="a">src</span><span class="e">=</span><span class="v">"company-logo_fb22cdf5-b72e-4bd7-89f1-f5a1a830a792.png"</span><span class="d">&gt;&lt;/</span><span class="t">span</span><span class="d">&gt;&lt;/</span><span class="t">td</span><span class="d">&gt;</span></div>
<div class="ln" style="top:389.6px">11</div>
<div class="cl" style="top:389.6px">    <span class="d">&lt;</span><span class="t">td</span> <span class="a">style</span><span class="e">=</span><span class="v">"FONT-SIZE: 10pt; FONT-FAMILY: Arial; WIDTH: 35px"</span> <span class="a">valign</span><span class="e">=</span><span class="v">"middle"</span> <span class="a">rowspan</span><span class="e">=</span><span class="v">"2"</span> <span class="a">align</span><span class="e">=</span><span class="v">"left"</span> <span class="a">class</span><span class="e">=</span><span class="v">""</span><span class="d">&gt;&lt;</span><span class="t">span</span> </div>
<div class="cl" style="top:408.6px"><span class="a">style</span><span class="e">=</span><span class="v">"COLOR: #ffffff"</span><span class="d">&gt;</span>.<span class="d">&lt;/</span><span class="t">span</span><span class="d">&gt;&lt;/</span><span class="t">td</span><span class="d">&gt;</span></div>
<div class="ln" style="top:427.6px">12</div>
<div class="cl" style="top:427.6px">    <span class="d">&lt;</span><span class="t">td</span> <span class="a">style</span><span class="e">=</span><span class="v">"FONT-SIZE: 10pt; FONT-FAMILY: Arial; WIDTH: 305px"</span> <span class="a">valign</span><span class="e">=</span><span class="v">"top"</span> <span class="a">class</span><span class="e">=</span><span class="v">""</span><span class="d">&gt;&lt;</span><span class="t">strong</span> <span class="a">style</span><span class="e">=</span><span class="v">"FONT-SIZE: 11pt; COLOR: </span></div>
<div class="cl" style="top:446.6px"><span class="v">#3c3c3b"</span><span class="d">&gt;</span><span class="pb">{First name}</span></div>
<div class="ln" style="top:465.6px">13</div>
<div class="cl" style="top:465.6px">      <span class="pb">{Last name}</span><span class="d">&lt;</span><span class="t">br</span><span class="d">&gt;</span><span class="pb">{Title}</span><span class="d">&lt;/</span><span class="t">strong</span><span class="d">&gt;&lt;/</span><span class="t">td</span><span class="d">&gt;</span></div>
<div class="ln" style="top:484.6px">14</div>
<div class="cl" style="top:484.6px">    <span class="d">&lt;</span><span class="t">td</span> <span class="a">style</span><span class="e">=</span><span class="v">"FONT-SIZE: 10pt; FONT-FAMILY: Arial; WIDTH: 145px"</span> <span class="a">valign</span><span class="e">=</span><span class="v">"bottom"</span> <span class="a">rowspan</span><span class="e">=</span><span class="v">"2"</span> <span class="a">align</span><span class="e">=</span><span class="v">"right"</span><span class="d">&gt;&lt;</span><span class="t">span</span> </div>
<div class="cl" style="top:503.6px"><span class="a">style</span><span class="e">=</span><span class="v">"COLOR: #ffffff"</span><span class="d">&gt;</span>.<span class="d">&lt;/</span><span class="t">span</span><span class="d">&gt;&lt;</span><span class="t">a</span> <span class="a">class</span><span class="e">=</span><span class="v">"socialLink"</span> <span class="a">href</span><span class="e">=</span><span class="v">"</span><span class="u">https://www.facebook.com/user_name_here</span><span class="v">"</span><span class="d">&gt;&lt;</span><span class="t">img</span> <span class="a">class</span><span class="e">=</span><span class="v">"socialLink"</span> </div>
<div class="cl" style="top:522.6px"><span class="a">border</span><span class="e">=</span><span class="v">"0"</span> <span class="a">src</span><span class="e">=</span><span class="v">"058_sm_fb_b4c5bf88-e415-4f62-8f86-6308c9fe4a38.png"</span><span class="d">&gt;&lt;/</span><span class="t">a</span><span class="d">&gt;</span>&amp;nbsp;<span class="d">&lt;</span><span class="t">a</span> <span class="a">class</span><span class="e">=</span><span class="v">"socialLink"</span> <span class="a">href</span><span class="e">=</span><span class="v">"</span><span class="u">https://www.linkedin.</span></div>
<div class="cl" style="top:541.6px"><span class="u">com/company/user_name_here</span><span class="v">"</span><span class="d">&gt;&lt;</span><span class="t">img</span> <span class="a">class</span><span class="e">=</span><span class="v">"socialLink"</span> <span class="a">border</span><span class="e">=</span><span class="v">"0"</span> <span class="a">src</span><span class="e">=</span><span class="v">"058_sm_in_e5fb2776-0c46-4412-a144-562ec71bfa8c.png"</span><span class="d">&gt;&lt;/</span><span class="t">a</span><span class="d">&gt;</span>&amp;</div>
<div class="cl" style="top:560.6px">nbsp;<span class="d">&lt;</span><span class="t">a</span> <span class="a">class</span><span class="e">=</span><span class="v">"socialLink"</span> <span class="a">href</span><span class="e">=</span><span class="v">"</span><span class="u">https://www.twitter.com/user_name_here</span><span class="v">"</span><span class="d">&gt;&lt;</span><span class="t">img</span> <span class="a">class</span><span class="e">=</span><span class="v">"socialLink"</span> <span class="a">border</span><span class="e">=</span><span class="v">"0"</span> </div>
<div class="cl" style="top:579.6px"><span class="a">src</span><span class="e">=</span><span class="v">"058_sm_twitter_fc15fdb2-dc84-4efa-bc6f-810ab7a7116b.png"</span><span class="d">&gt;&lt;/</span><span class="t">a</span><span class="d">&gt;</span>&amp;nbsp;<span class="d">&lt;</span><span class="t">a</span> <span class="a">class</span><span class="e">=</span><span class="v">"socialLink"</span> <span class="a">href</span><span class="e">=</span><span class="v">"</span><span class="u">https://www.youtube.com/</span></div>
<div class="cl" style="top:598.6px"><span class="u">user/user_name_here</span><span class="v">"</span><span class="d">&gt;&lt;</span><span class="t">img</span> <span class="a">class</span><span class="e">=</span><span class="v">"socialLink"</span> <span class="a">border</span><span class="e">=</span><span class="v">"0"</span> <span class="a">src</span><span class="e">=</span><span class="v">"058_sm_y2_788cab89-2e32-403d-8907-09ab8ee7e0d3.png"</span><span class="d">&gt;&lt;/</span><span class="t">a</span><span class="d">&gt;</span>&amp;nbsp;<span class="d">&lt;</span><span class="t">a</span> </div>
<div class="cl" style="top:617.6px"><span class="a">class</span><span class="e">=</span><span class="v">"socialLink"</span> <span class="a">href</span><span class="e">=</span><span class="v">"</span><span class="u">https://www.pinterest.com/user_name_here</span><span class="v">"</span><span class="d">&gt;&lt;</span><span class="t">img</span> <span class="a">class</span><span class="e">=</span><span class="v">"socialLink"</span> <span class="a">border</span><span class="e">=</span><span class="v">"0"</span> </div>
<div class="cl" style="top:636.6px"><span class="a">src</span><span class="e">=</span><span class="v">"058_sm_pinterest_bf183cd6-c8c1-43a5-ac15-4df6ee80094b.png"</span><span class="d">&gt;&lt;/</span><span class="t">a</span><span class="d">&gt;&lt;/</span><span class="t">td</span><span class="d">&gt;&lt;/</span><span class="t">tr</span><span class="d">&gt;</span></div>
<div class="ln" style="top:655.6px">15</div>
<div class="cl" style="top:655.6px">  <span class="d">&lt;</span><span class="t">tr</span><span class="d">&gt;</span></div>
<div class="ln" style="top:674.6px">16</div>
<div class="cl" style="top:674.6px">    <span class="d">&lt;</span><span class="t">td</span> <span class="a">style</span><span class="e">=</span><span class="v">"FONT-SIZE: 9pt; FONT-FAMILY: Arial; WIDTH: 305px; COLOR: #3c3c3b; PADDING-BOTTOM: 3px"</span> <span class="a">valign</span><span class="e">=</span><span class="v">"bottom"</span> </div>
<div class="cl" style="top:693.6px"><span class="a">class</span><span class="e">=</span><span class="v">""</span><span class="d">&gt;&lt;</span><span class="t">strong</span> <span class="a">style</span><span class="e">=</span><span class="v">"COLOR: #3c3c3b"</span><span class="d">&gt;</span>P<span class="d">&lt;/</span><span class="t">strong</span><span class="d">&gt;</span> <span class="d">&lt;</span><span class="t">a</span> <span class="a">style</span><span class="e">=</span><span class="v">"FONT-SIZE: 9pt; TEXT-DECORATION: none; COLOR: #3c3c3b"</span> <span class="a">href</span><span class="e">=</span><span class="v">"tel:</span></div>
<div class="cl" style="top:712.6px"><span class="vb">{Phone}</span><span class="v">"</span><span class="d">&gt;</span><span class="pb">{Phone}</span><span class="d">&lt;/</span><span class="t">a</span><span class="d">&gt;</span><span class="pb">{RT}</span>&amp;nbsp;| <span class="d">&lt;</span><span class="t">strong</span> <span class="a">style</span><span class="e">=</span><span class="v">"COLOR: #3c3c3b"</span><span class="d">&gt;</span>M <span class="d">&lt;/</span><span class="t">strong</span><span class="d">&gt;&lt;</span><span class="t">a</span> <span class="a">style</span><span class="e">=</span><span class="v">"FONT-SIZE: 9pt; TEXT-DECORATION: none; </span></div>
<div class="cl" style="top:731.6px"><span class="v">COLOR: #3c3c3b"</span> <span class="a">href</span><span class="e">=</span><span class="v">"tel:</span><span class="vb">{Mobile}</span><span class="v">"</span><span class="d">&gt;</span><span class="pb">{Mobile}</span><span class="d">&lt;/</span><span class="t">a</span><span class="d">&gt;</span><span class="pb">{/RT}</span><span class="d">&lt;</span><span class="t">br</span><span class="d">&gt;&lt;</span><span class="t">strong</span> <span class="a">style</span><span class="e">=</span><span class="v">"COLOR: #3c3c3b"</span><span class="d">&gt;</span>E<span class="d">&lt;/</span><span class="t">strong</span><span class="d">&gt;</span> <span class="d">&lt;</span><span class="t">a</span> <span class="a">style</span><span class="e">=</span><span class="v">"FONT-SIZE: 9pt; </span></div>
<div class="cl" style="top:750.6px"><span class="v">TEXT-DECORATION: none; COLOR: #3c3c3b"</span> <span class="a">href</span><span class="e">=</span><span class="v">"mailto:</span><span class="vb">{E-mail}</span><span class="v">"</span><span class="d">&gt;</span><span class="pb">{E-mail}</span><span class="d">&lt;/</span><span class="t">a</span><span class="d">&gt;</span>&amp;nbsp;<span class="d">&lt;</span><span class="t">br</span><span class="d">&gt;&lt;</span><span class="t">span</span> <span class="a">style</span><span class="e">=</span><span class="v">"COLOR: #0069b4"</span><span class="d">&gt;&lt;</span><span class="t">a</span> </div>
<div class="cl" style="top:769.6px"><span class="a">style</span><span class="e">=</span><span class="v">"FONT-SIZE: 9pt; COLOR: #0069b4"</span> <span class="a">href</span><span class="e">=</span><span class="v">"</span><span class="u">http://www.my-company.com</span><span class="v">"</span><span class="d">&gt;</span>www.my-company.com<span class="d">&lt;/</span><span class="t">a</span><span class="d">&gt;&lt;</span><span class="t">br</span><span class="d">&gt;&lt;</span><span class="t">br</span><span class="d">&gt;&lt;/</span><span class="t">span</span><span class="d">&gt;</span>22 Branding </div>
<div class="ln" style="top:788.6px">17</div>
<div class="cl" style="top:788.6px">      Blvd |&amp;nbsp;Azure Hill, NV |&amp;nbsp;89404, USA<span class="d">&lt;/</span><span class="t">td</span><span class="d">&gt;&lt;/</span><span class="t">tr</span><span class="d">&gt;</span></div>
<div class="ln" style="top:807.6px">18</div>
<div class="cl" style="top:807.6px">  <span class="d">&lt;</span><span class="t">tr</span><span class="d">&gt;</span></div>
<div class="ln" style="top:826.6px">19</div>
<div class="cl" style="top:826.6px">    <span class="d">&lt;</span><span class="t">td</span> <span class="a">style</span><span class="e">=</span><span class="v">"FONT-SIZE: 10pt; FONT-FAMILY: Arial; WIDTH: 600px; PADDING-TOP: 25px"</span> <span class="a">valign</span><span class="e">=</span><span class="v">"top"</span> <span class="a">colspan</span><span class="e">=</span><span class="v">"4"</span><span class="d">&gt;&lt;</span><span class="t">img</span> <span class="a">border</span><span class="e">=</span><span class="v">"0"</span> </div>
<div class="cl" style="top:845.6px"><span class="a">src</span><span class="e">=</span><span class="v">"banner_600px_b2476c07-3b64-44a0-9d0d-e67d86ff62fb.png"</span><span class="d">&gt;&lt;</span><span class="t">br</span><span class="d">&gt;&lt;</span><span class="t">span</span> <span class="a">style</span><span class="e">=</span><span class="v">"COLOR: #ffffff"</span><span class="d">&gt;</span>.<span class="d">&lt;/</span><span class="t">span</span><span class="d">&gt;&lt;/</span><span class="t">td</span><span class="d">&gt;&lt;/</span><span class="t">tr</span><span class="d">&gt;&lt;/</span><span class="t">tbody</span><span class="d">&gt;&lt;/</span></div>
<div class="cl" style="top:864.6px"><span class="t">table</span><span class="d">&gt;&lt;</span><span class="t">p</span><span class="d">&gt;&lt;/</span><span class="t">p</span><span class="d">&gt;</span></div>
<div class="ln" style="top:883.6px">20</div>
<div class="cl" style="top:883.6px"><span class="d">&lt;</span><span class="t">p</span> <span class="a">style</span><span class="e">=</span><span class="v">"FONT-SIZE: 10pt; MARGIN-BOTTOM: 5pt; FONT-FAMILY: Arial; MARGIN-TOP: 0px"</span><span class="d">&gt;&lt;/</span><span class="t">p</span><span class="d">&gt;</span></div>
<div class="ln" style="top:902.6px">21</div>
<svg class="abs" style="left:0;top:0;overflow:visible" width="1872" height="1097" viewBox="0 0 1872 1097">
<defs><filter id="sh" x="-5%" y="-5%" width="110%" height="115%"><feDropShadow dx="1" dy="3" stdDeviation="3" flood-color="#000" flood-opacity=".35"/></filter>
<filter id="sb" x="-20%" y="-20%" width="140%" height="150%"><feDropShadow dx="0" dy="2" stdDeviation="2.5" flood-color="#000" flood-opacity=".22"/></filter></defs>
<g fill="none" stroke="#ff8000" stroke-width="2.2" filter="url(#sb)">
<rect x="384.6" y="52.8" width="41.8" height="66.8" rx="1.2"/>
<rect x="251.4" y="386.1" width="87" height="17" rx="1" fill="rgba(0,0,0,.045)"/>
</g>
<rect x="888.5" y="713.6" width="17.4" height="16.5" fill="none" stroke="#f9a55a" stroke-width="1.8"/>
<g filter="url(#sh)" fill="#ff8000" stroke="none">
<path d="M352 411L872 706" stroke="#ff8000" stroke-width="4.2" fill="none"/>
<path d="M340 404.5L358.5 406.5L351.5 418.5Z"/>
<path d="M885 712.8L866.5 710.8L873.5 698.8Z"/>
</g></svg>
<div class="ocirc" style="left:425.6px;top:118.9px"><span style="display:inline-block;line-height:1;clip-path:polygon(0 0,100% 0,100% 73%,67% 73%,67% 100%,41% 100%,41% 73%,0 73%)">1</span></div>
<div class="ocirc" style="left:905.7px;top:729.3px">2</div>
<div id="frame"></div>
</body></html>
